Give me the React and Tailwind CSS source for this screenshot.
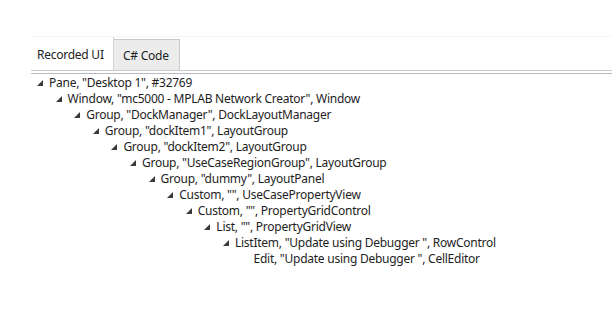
import React from 'react';

const tree = [
    'Pane, "Desktop 1", #32769',
    'Window, "mc5000 - MPLAB Network Creator", Window',
    'Group, "DockManager", DockLayoutManager',
    'Group, "dockItem1", LayoutGroup',
    'Group, "dockItem2", LayoutGroup',
    'Group, "UseCaseRegionGroup", LayoutGroup',
    'Group, "dummy", LayoutPanel',
    'Custom, "", UseCasePropertyView',
    'Custom, "", PropertyGridControl',
    'List, "", PropertyGridView',
    'ListItem, "Update using Debugger ", RowControl',
    'Edit, "Update using Debugger ", CellEditor',
];

function Expander() {
    return (
        <svg width="6" height="6" viewBox="0 0 6 6" className="shrink-0">
            <polygon points="6,0 6,6 0,6" fill="#3a3a3a" />
        </svg>
    );
}

function Node({ index }) {
    const label = tree[index];
    const hasChild = index < tree.length - 1;
    return (
        <div>
            <div className="flex items-center h-[16px] gap-[6px] whitespace-nowrap">
                {hasChild ? <Expander /> : <span className="w-[6px] shrink-0" />}
                <span>{label}</span>
            </div>
            {hasChild && (
                <div className="pl-[18.6px]">
                    <Node index={index + 1} />
                </div>
            )}
        </div>
    );
}

export default function App() {
    return (
        <div
            className="w-[616px] h-[319px] bg-white overflow-hidden pt-[36px] pl-[31px] pr-[4px] text-[12px] tracking-[-0.25px] text-[#1e1e1e]"
            style={{ fontFamily: '"Noto Sans", "Open Sans", sans-serif' }}
        >
            {/* Tab strip */}
            <div className="border-t border-[#eefafa]">
                <div className="flex items-start h-[33px]">
                    <div className="w-[83px] h-[33px] bg-white border-r border-[#d4d4d4] flex items-center pl-[6px] pt-[2px]">
                        Recorded UI
                    </div>
                    <div className="mt-[2px] w-[66px] h-[31px] bg-[#ececec] border-t border-r border-[#cacaca] flex items-center pl-[9px] pt-[1px]">
                        C# Code
                    </div>
                </div>
                <div className="h-[4px] border-t border-b border-t-[#cbcbcb] border-b-[#b9b9c1]" />
            </div>

            {/* Tree */}
            <div className="pl-[6px] mt-[1px]">
                <Node index={0} />
            </div>
        </div>
    );
}
